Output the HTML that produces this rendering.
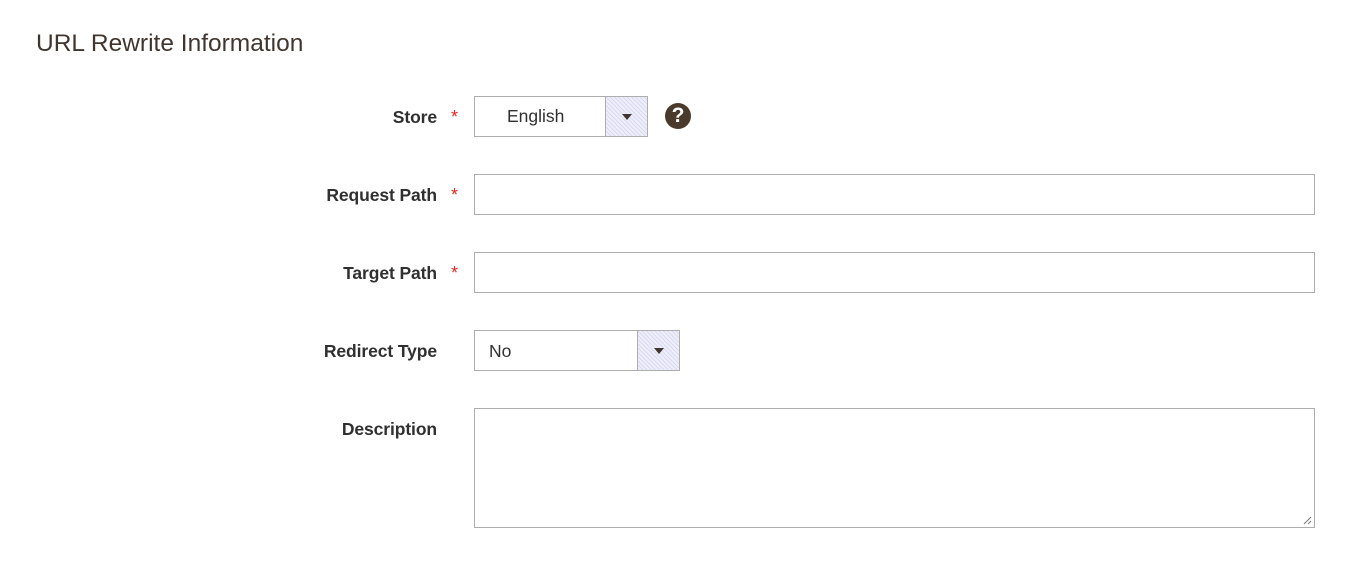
<!DOCTYPE html>
<html><head><meta charset="utf-8"><style>
body{margin:0;width:1356px;height:568px;background:#fff;font-family:"Liberation Sans",sans-serif;color:#303030;position:relative;overflow:hidden}
.a{position:absolute}
h1{position:absolute;left:36px;top:30px;margin:0;font-size:24.5px;font-weight:normal;color:#41362f}
.lbl{position:absolute;right:919px;font-size:17.5px;font-weight:bold;color:#303030;letter-spacing:-0.1px}
.st{position:absolute;left:451px;color:#e22626;font-size:18px}
.box{position:absolute;border:1px solid #adadad;background:#fff;box-sizing:border-box}
.dd{position:absolute;top:0;bottom:0;right:0;border-left:1px solid #adadad;background-color:#eeeefa;background-image:repeating-linear-gradient(45deg,rgba(180,180,230,.35) 0 1px,transparent 1px 3px)}
.dd:after{content:"";position:absolute;left:50%;top:50%;margin:-3px 0 0 -5px;border-left:5px solid transparent;border-right:5px solid transparent;border-top:6px solid #41362f}
.txt{position:absolute;font-size:17.5px;color:#303030}
</style></head><body>
<h1>URL Rewrite Information</h1>

<div class="lbl" style="top:107px">Store</div><div class="st" style="top:107px">*</div>
<div class="box" style="left:474px;top:96px;width:174px;height:41px">
<div class="txt" style="left:32px;top:9px">English</div>
<div class="dd" style="width:41px"></div></div>
<div class="a" style="left:665px;top:103px;width:26px;height:26px;border-radius:50%;background:#4a3a2c;color:#fff;font-weight:bold;font-size:21px;text-align:center;line-height:26px">?</div>

<div class="lbl" style="top:185px">Request Path</div><div class="st" style="top:185px">*</div>
<div class="box" style="left:474px;top:174px;width:841px;height:41px"></div>

<div class="lbl" style="top:263px">Target Path</div><div class="st" style="top:263px">*</div>
<div class="box" style="left:474px;top:252px;width:841px;height:41px"></div>

<div class="lbl" style="top:341px">Redirect Type</div>
<div class="box" style="left:474px;top:330px;width:206px;height:41px">
<div class="txt" style="left:14px;top:10px">No</div>
<div class="dd" style="width:41px"></div></div>

<div class="lbl" style="top:419px">Description</div>
<div class="box" style="left:474px;top:408px;width:841px;height:120px">
<svg class="a" style="right:2px;bottom:2px" width="10" height="10"><path d="M9 2L2 9M9 6L6 9" stroke="#777" stroke-width="1"/></svg></div>
</body></html>
